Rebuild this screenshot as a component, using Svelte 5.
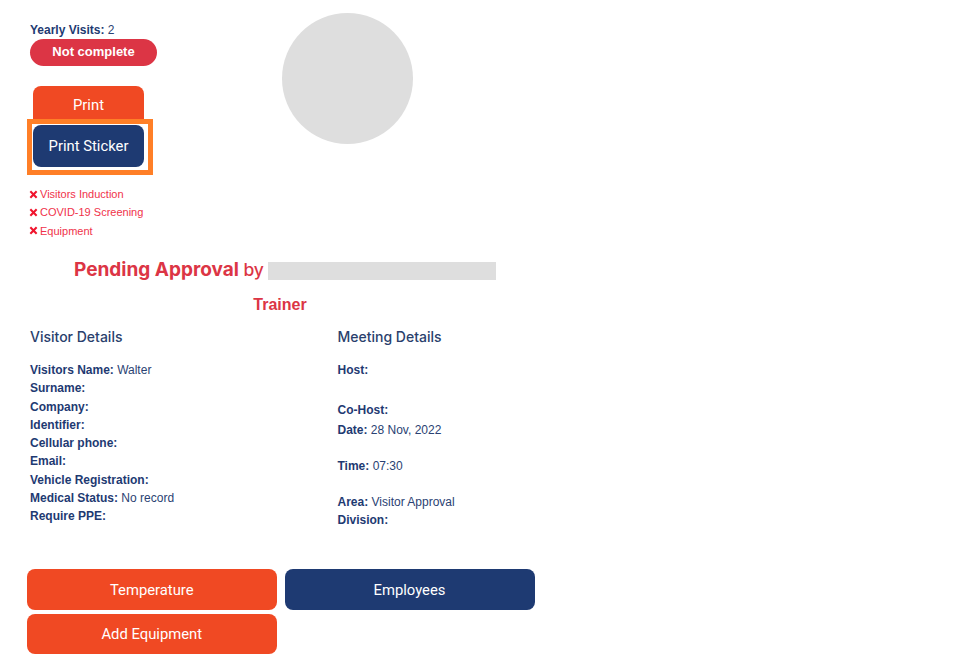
<script>
  const visitor = [
    ['Visitors Name:', 'Walter'], ['Surname:', ''], ['Company:', ''], ['Identifier:', ''],
    ['Cellular phone:', ''], ['Email:', ''], ['Vehicle Registration:', ''],
    ['Medical Status:', 'No record'], ['Require PPE:', '']
  ];
  const checks = ['Visitors Induction', 'COVID-19 Screening', 'Equipment'];
</script>

<div class="page">
  <div class="top">
    <div class="left">
      <p class="visits"><b>Yearly Visits:</b> 2</p>
      <div class="pill">Not complete</div>
      <div class="stack">
        <button class="btn orange small first">Print</button>
        <div class="focus"><button class="btn navy small">Print Sticker</button></div>
      </div>
      <ul class="checks">
        {#each checks as c}
          <li>
            <svg viewBox="0 0 10 10" width="9" height="9"><path d="M1.5 1.5l7 7M8.500 1.500l-7 7" stroke="#f0142d" stroke-width="2.300" fill="none"/></svg>{c}
          </li>
        {/each}
      </ul>
    </div>
    <div class="avatar"></div>
  </div>

  <div class="pending"><b>Pending Approval</b> <span class="by">by</span> <span class="redact"></span></div>
  <div class="trainer">Trainer</div>

  <div class="details">
    <section>
      <h2>Visitor Details</h2>
      {#each visitor as [k, v]}
        <div class="row"><b>{k}</b> {v}</div>
      {/each}
    </section>
    <section>
      <h2>Meeting Details</h2>
      <div class="row tall"><b>Host:</b></div>
      <div class="row b20"><b>Co-Host:</b></div>
      <div class="row tall2"><b>Date:</b> 28 Nov, 2022</div>
      <div class="row tall2"><b>Time:</b> 07:30</div>
      <div class="row"><b>Area:</b> Visitor Approval</div>
      <div class="row"><b>Division:</b></div>
    </section>
  </div>

  <div class="actions">
    <button class="btn orange">Temperature</button>
    <button class="btn navy">Employees</button>
    <button class="btn orange last">Add Equipment</button>
  </div>
</div>

<style>
  :global(body) { margin: 0; background: #fff; }
  .page {
    width: 964px; height: 668px; overflow: hidden; box-sizing: border-box;
    font-family: "Liberation Sans", Arial, sans-serif; color: #2a4273; font-size: 12px;
  }
  b { font-weight: 700; color: #1e3a72; }
  .top { display: flex; height: 240px; padding-top: 13px; box-sizing: border-box; }
  .left { width: 252px; padding-left: 30px; box-sizing: border-box; }
  .visits { margin: 10px 0 0; line-height: 14px; }
  .pill {
    width: 127px; height: 27px; margin-top: 2px; border-radius: 14px; background: #dc3545; color: #fff;
    font-weight: 700; font-size: 13px; line-height: 26px; text-align: center;
  }
  .stack { margin-left: 3px; margin-top: 20px; }
  .btn {
    display: block; border: none; color: #fff; font-family: Roboto, sans-serif; font-size: 14.8px;
    border-radius: 8px; padding: 0; text-align: center;
  }
  .orange { background: #f04923; }
  .navy { background: #1e3a72; }
  .small { width: 111px; }
  .first { height: 44px; padding-bottom: 6px; }
  .focus {
    position: relative; z-index: 1; box-sizing: border-box; width: 126px; height: 56px;
    margin: -11px 0 0 -6px; padding: 1px 0 0 1px; border: 5px solid #ff7f27; background: #fff;
  }
  .focus .btn { height: 42px; }
  .checks {
    list-style: none; margin: 10px 0 0 -1px; padding: 0; font-size: 11px; color: #f0324a;
    line-height: 18.3px;
  }
  .checks li { display: flex; align-items: center; gap: 2px; }
  .avatar { width: 131px; height: 131px; border-radius: 50%; background: #dedede; margin-left: 30px; }
  .pending {
    display: flex; align-items: center; gap: 4.5px; height: 20px; margin: 20px 0 0 74px;
    color: #dc3545; font-family: Inter, "Liberation Sans", sans-serif;
  }
  .pending b { color: #dc3545; font-size: 19px; font-weight: 700; position: relative; top: -1px; }
  .by { font-size: 17.5px; font-weight: 500; position: relative; top: -1px; }
  .redact { width: 228px; height: 18px; background: #dedede; position: relative; top: 1px; }
  .trainer { width: 560px; text-align: center; margin-top: 16px; color: #dc3545; font-weight: 700; font-size: 16px; line-height: 18px; }
  .details { display: flex; padding-left: 30px; margin-top: 14px; height: 241px; }
  section { width: 307.5px; }
  h2 { margin: 0 0 15px; font-family: Inter, "Liberation Sans", sans-serif; font-size: 14px; font-weight: 500; line-height: 18px; color: #2a3f6d; }
  .row { line-height: 18.25px; }
  .tall { height: 40px; }
  .b20 { height: 20px; }
  .tall2 { height: 36px; }
  .actions {
    display: grid; grid-template-columns: 249.5px 250px; gap: 4px 8px; margin: 0 0 0 27px;
  }
  .actions .btn { height: 41px; }
  .actions .last { height: 40px; }
</style>
